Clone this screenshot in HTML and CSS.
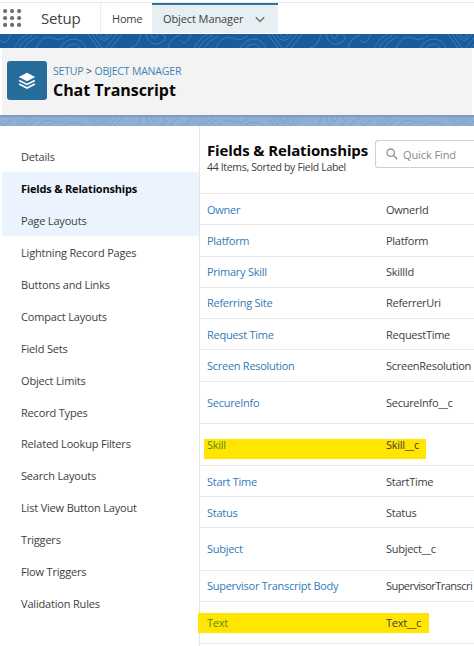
FILE: index.html
```
<!DOCTYPE html>
<html lang="en">
<head>
  <meta charset="UTF-8">
  <meta name="viewport" content="width=device-width, initial-scale=1.0">
  <title>Chat Transcript | Object Manager</title>
  <link rel="stylesheet" href="styles.css">
</head>
<body>
  <header class="topbar">
    <svg class="launcher" viewBox="0 0 19 19" fill="#706e6b">
      <circle cx="2.1" cy="2.1" r="2.1"/><circle cx="9.1" cy="2.1" r="2.1"/><circle cx="16.1" cy="2.1" r="2.1"/>
      <circle cx="2.1" cy="9" r="2.1"/><circle cx="9.1" cy="9" r="2.1"/><circle cx="16.1" cy="9" r="2.1"/>
      <circle cx="2.1" cy="15.9" r="2.1"/><circle cx="9.1" cy="15.9" r="2.1"/><circle cx="16.1" cy="15.9" r="2.1"/>
    </svg>
    <div class="app-name">Setup</div>
    <nav class="tabs">
      <a class="tab home">Home</a>
      <a class="tab active">Object Manager
        <svg class="chevron" viewBox="0 0 10 7"><path d="M0.8 1.2 L5 5.6 L9.2 1.2" fill="none" stroke="#706e6b" stroke-width="1.4"/></svg>
      </a>
    </nav>
  </header>

  <div class="band">
    <svg width="474" height="14">
      <defs>
        <pattern id="waves" width="180" height="14" patternUnits="userSpaceOnUse">
          <g fill="none" stroke="#5c96ca" stroke-width="0.8" opacity="0.65">
            <path d="M0 6 Q5 12 9 4 L11 0 M14 14 Q20 3 28 0 M19 14 Q24 5 33 1 M24 14 Q28 7 38 2 M36 14 Q42 0 52 4 T68 1"/>
            <path d="M60 14 Q66 5 74 5 T86 14 M66 14 Q74 6 80 14 M88 0 L98 14 M92 0 L102 14 M96 0 Q104 13 112 0 M100 0 Q104 8 108 0 M106 14 L117 0 M111 14 L122 0"/>
            <path d="M130 14 Q138 13 141 0 M146 0 Q150 14 160 9 T162 0 M151 0 Q154 9 158 0 M168 14 Q170 4 180 1"/>
          </g>
        </pattern>
      </defs>
      <rect width="474" height="14" fill="url(#waves)"/>
    </svg>
  </div>

  <section class="page-header">
    <div class="object-icon">
      <svg viewBox="0 0 18 18" width="18" height="18">
        <path d="M9 0.8 L17.2 5 L9 9.2 L0.8 5 Z" fill="#fff"/>
        <path d="M1.2 8.4 L9 12.4 L16.8 8.4 M1.2 12 L9 16 L16.8 12" fill="none" stroke="#fff" stroke-width="1.7"/>
      </svg>
    </div>
    <div class="heading">
      <div class="breadcrumb"><a>SETUP</a> <span>&gt;</span> <a>OBJECT MANAGER</a></div>
      <h1>Chat Transcript</h1>
    </div>
  </section>

  <div class="band light">
    <svg width="474" height="11"><rect width="474" height="11" fill="url(#waves)"/></svg>
  </div>

  <main class="content">
    <nav class="sidebar">
      <a>Details</a>
      <a class="selected">Fields &amp; Relationships</a>
      <a class="hover">Page Layouts</a>
      <a>Lightning Record Pages</a>
      <a>Buttons and Links</a>
      <a>Compact Layouts</a>
      <a>Field Sets</a>
      <a>Object Limits</a>
      <a>Record Types</a>
      <a>Related Lookup Filters</a>
      <a>Search Layouts</a>
      <a>List View Button Layout</a>
      <a>Triggers</a>
      <a>Flow Triggers</a>
      <a>Validation Rules</a>
    </nav>

    <section class="fields">
      <div class="fields-header">
        <div class="fields-title">
          <h2>Fields &amp; Relationships</h2>
          <p>44 Items, Sorted by Field Label</p>
        </div>
        <div class="search">
          <svg viewBox="0 0 12 12" width="12" height="12"><circle cx="4.7" cy="4.7" r="3.7" fill="none" stroke="#939393" stroke-width="1.3"/><path d="M7.5 7.5 L11.2 11.2" stroke="#939393" stroke-width="1.5"/></svg>
          <span>Quick Find</span>
        </div>
      </div>
      <div class="table">
        <div class="row"><a>Owner</a><span>OwnerId</span></div>
        <div class="row"><a>Platform</a><span>Platform</span></div>
        <div class="row"><a>Primary Skill</a><span>SkillId</span></div>
        <div class="row"><a>Referring Site</a><span>ReferrerUri</span></div>
        <div class="row"><a>Request Time</a><span>RequestTime</span></div>
        <div class="row"><a>Screen Resolution</a><span>ScreenResolution</span></div>
        <div class="row tall"><a>SecureInfo</a><span>SecureInfo__c</span></div>
        <div class="row tall marked skill"><a>Skill</a><span>Skill__c</span></div>
        <div class="row"><a>Start Time</a><span>StartTime</span></div>
        <div class="row"><a>Status</a><span>Status</span></div>
        <div class="row tall"><a>Subject</a><span>Subject__c</span></div>
        <div class="row"><a>Supervisor Transcript Body</a><span class="long">SupervisorTranscri</span></div>
        <div class="row tall marked text"><a>Text</a><span>Text__c</span></div>
      </div>
    </section>
  </main>
</body>
</html>
```
FILE: styles.css
```
* {
  box-sizing: border-box;
}
body {
  margin: 0;
  height: 646px;
  overflow: hidden;
  background: #fff;
  font-family: "Open Sans", "Noto Sans", sans-serif;
  font-size: 11px;
  color: #3e3e3c;
}
h1, h2, p {
  margin: 0;
}
.topbar {
  display: flex;
  height: 32px;
  margin-top: 2px;
  border-top: 1px solid #e8e8e8;
}
.launcher {
  width: 19px;
  height: 19px;
  margin: 6px 0 0 3px;
}
.app-name {
  width: 79px;
  padding-left: 19px;
  font-size: 15px;
  letter-spacing: -0.2px;
  line-height: 31px;
  border-right: 1px solid #ececec;
}
.tabs {
  display: flex;
}
.tab {
  line-height: 32px;
}
.home {
  width: 51px;
  padding-left: 11px;
  letter-spacing: -0.2px;
}
.active {
  display: flex;
  width: 126px;
  height: 30px;
  padding-left: 11px;
  line-height: 28px;
  letter-spacing: -0.1px;
  background: #e8eff3;
  border-top: 2px solid #2f74a0;
}
.chevron {
  width: 10px;
  height: 7px;
  margin: 11px 0 0 12px;
}
.band {
  height: 14px;
  overflow: hidden;
  background: #195c9e;
}
.band svg {
  display: block;
}
.band.light {
  height: 11px;
  background: #8dafd7;
  border-top: 2px solid #8798b3;
}
.page-header {
  display: flex;
  height: 67px;
  margin: 0 2px;
  padding: 13px 0 0 5px;
  background: #f3f3f3;
}
.object-icon {
  display: flex;
  align-items: center;
  justify-content: center;
  width: 40px;
  height: 39px;
  border-radius: 3px;
  background: #266d9c;
}
.heading {
  padding-left: 6px;
}
.breadcrumb {
  height: 19px;
  font-size: 10.5px;
  letter-spacing: -0.18px;
  line-height: 20px;
}
.breadcrumb a {
  color: #3f83b5;
}
h1 {
  font-size: 16px;
  letter-spacing: -0.05px;
  line-height: 21px;
  color: #080707;
}
.content {
  display: flex;
  height: 520px;
}
.sidebar {
  width: 200px;
  padding: 14px 0 0 2px;
  letter-spacing: -0.18px;
  border-right: 1px solid #e5e5e5;
}
.sidebar a {
  display: block;
  height: 31.95px;
  padding-left: 19px;
  line-height: 34px;
}
.sidebar .selected,
.sidebar .hover {
  background: #ebf4fe;
}
.sidebar .selected {
  font-weight: bold;
  color: #080707;
}
.fields {
  flex: 1;
  min-width: 0;
}
.fields-header {
  display: flex;
  height: 68px;
  border-bottom: 1px solid #e5e7eb;
}
.fields-title {
  width: 175px;
  padding: 14px 0 0 7px;
  white-space: nowrap;
}
h2 {
  font-size: 15px;
  letter-spacing: -0.12px;
  line-height: 20px;
  color: #080707;
}
.fields-title p {
  font-size: 10.5px;
  letter-spacing: -0.33px;
  line-height: 14px;
}
.search {
  display: flex;
  flex: 1;
  align-items: center;
  height: 28px;
  margin-top: 14px;
  padding-left: 10px;
  gap: 5px;
  letter-spacing: -0.1px;
  color: #8a8a8a;
  border: 1px solid #d0d0d0;
  border-right: 0;
  border-radius: 3px 0 0 3px;
}
.row {
  display: flex;
  align-items: center;
  height: 31.25px;
  padding-left: 7px;
  letter-spacing: -0.27px;
  border-bottom: 1px solid #e8e9eb;
  white-space: nowrap;
}
.row.tall {
  height: 42.2px;
}
.row a {
  flex: none;
  width: 179px;
  color: #347ab5;
}
.row .long {
  letter-spacing: -0.55px;
}
.marked a {
  color: #528c1c;
}
/* highlighter strokes over the two custom fields */
.skill {
  background: linear-gradient(#ffe500, #ffe500) 4px 15px / 222px 20px no-repeat;
}
.text {
  margin-left: -2px;
  padding-left: 9px;
  background: linear-gradient(#ffe500, #ffe500) 0 11px / 231px 20px no-repeat;
}
```
